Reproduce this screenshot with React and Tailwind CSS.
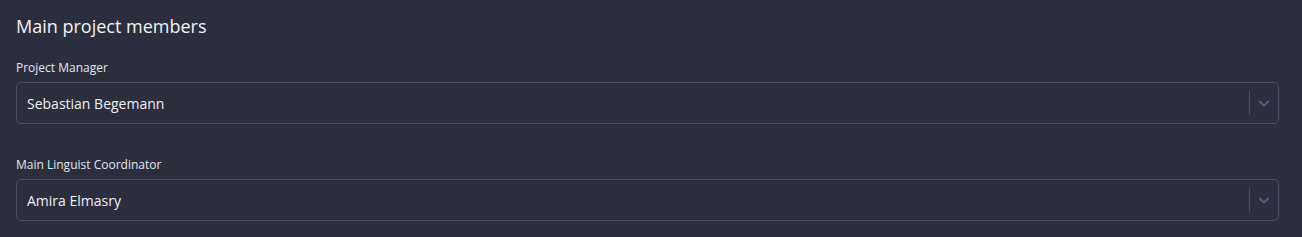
import React from 'react';

function SelectField({ label, value }) {
  return (
    <div className="flex flex-col">
      <label className="text-[12px] leading-4 text-[#e4e6ee] mb-[6px]">{label}</label>
      <div className="flex items-center h-[42px] rounded-[5px] border border-[#4a4f68] bg-[#2b2e3d]">
        <div className="flex-1 pl-[10px] text-[14px] text-[#eef0f6]">{value}</div>
        <div className="w-px h-[24px] bg-[#4a4f68]" />
        <div className="w-[28px] flex items-center justify-center">
          <svg width="18" height="18" viewBox="0 0 20 20" fill="#575c78">
            <path d="M4.516 7.548c0.436-0.446 1.043-0.481 1.576 0l3.908 3.747 3.908-3.747c0.533-0.481 1.141-0.446 1.574 0 0.436 0.445 0.408 1.197 0 1.615-0.406 0.418-4.695 4.502-4.695 4.502-0.217 0.223-0.502 0.335-0.787 0.335s-0.57-0.112-0.789-0.335c0 0-4.287-4.084-4.695-4.502s-0.436-1.17 0-1.615z" />
          </svg>
        </div>
      </div>
    </div>
  );
}

export default function App() {
  return (
    <div
      className="w-[1302px] h-[237px] bg-[#2b2e3d] px-4 pt-[13px] text-white"
      style={{ fontFamily: '"Open Sans", "Noto Sans", sans-serif' }}
    >
      <h2 className="text-[18px] leading-[26px] text-[#f2f3f7] mb-[21px]">Main project members</h2>
      <div className="pr-[7px] flex flex-col gap-[33px]">
        <SelectField label="Project Manager" value="Sebastian Begemann" />
        <SelectField label="Main Linguist Coordinator" value="Amira Elmasry" />
      </div>
    </div>
  );
}
